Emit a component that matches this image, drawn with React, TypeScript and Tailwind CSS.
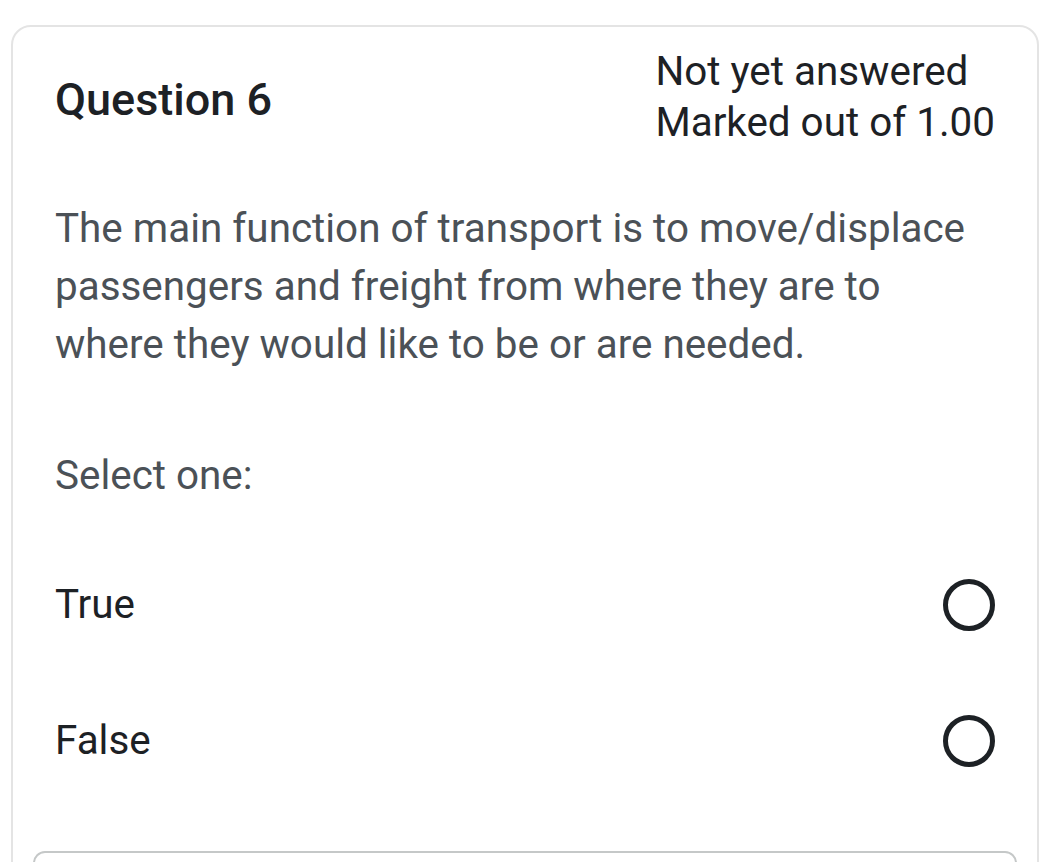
import React from 'react'

function Radio() {
  return (
    <svg width="52" height="52" viewBox="0 0 52 52" className="shrink-0">
      <circle cx="26" cy="26" r="23.5" fill="none" stroke="#1d2125" strokeWidth="5" />
    </svg>
  )
}

function Option({ label, className }: { label: string; className?: string }) {
  return (
    <div className={`flex items-center justify-between ${className ?? ''}`}>
      <span className="text-[40.4px] leading-[58px] text-[#1d2125]">{label}</span>
      <Radio />
    </div>
  )
}

export default function App() {
  return (
    <div
      className="h-[862px] w-[1064px] overflow-hidden bg-white"
      style={{ fontFamily: 'Roboto, "Noto Sans", sans-serif' }}
    >
      <div className="ml-[11px] mt-[25px] w-[1028px] rounded-[20px] border-2 border-[#e4e4e4] px-[20px] pt-[19px]">
        <div className="px-[22px]">
          <div className="flex items-start justify-between">
            <h2 className="mt-[28px] text-[45px] font-medium leading-[52px] text-[#1d2125]">Question 6</h2>
            <div className="text-[40.4px] leading-[51px] text-[#1d2125]">
              <div>Not yet answered</div>
              <div>Marked out of 1.00</div>
            </div>
          </div>

          <p className="mt-[52px] text-[40.4px] leading-[58px] text-[#4b5157]">
            The main function of transport is to move/displace passengers and freight from where they are to
            where they would like to be or are needed.
          </p>

          <div className="mt-[73px] text-[40.4px] leading-[58px] text-[#4b5157]">Select one:</div>

          <Option label="True" className="mt-[71px]" />
          <Option label="False" className="mt-[78px]" />
        </div>

        <div className="mt-[81px] h-[120px] rounded-[12px] border-2 border-[#c5c8c8]" />
      </div>
    </div>
  )
}
